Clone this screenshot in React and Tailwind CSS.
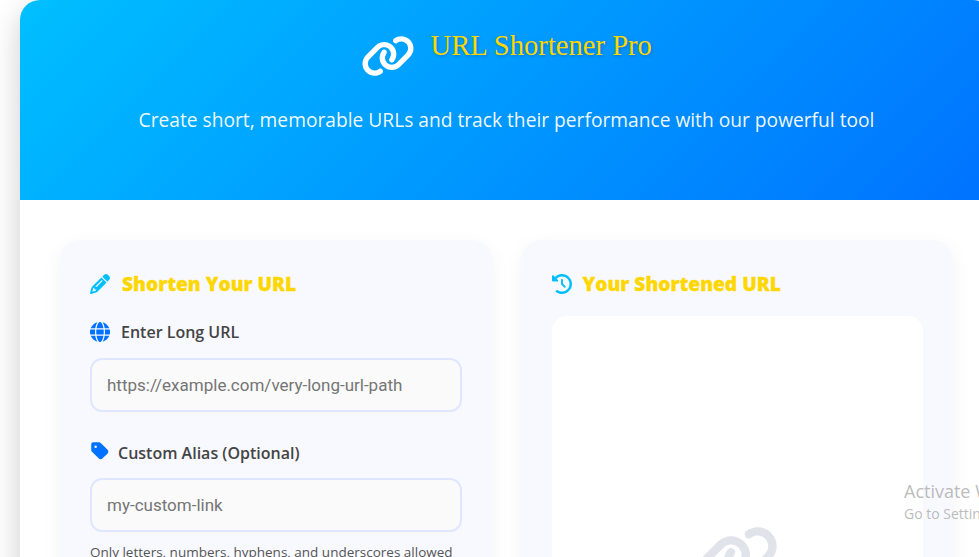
import React from 'react';
import { FaLink, FaPencil, FaGlobe, FaTag, FaClockRotateLeft } from 'react-icons/fa6';

const sans = 'font-["Open_Sans","Noto_Sans",sans-serif]';

function Field({ icon, label, placeholder, labelClass }) {
  return (
    <div>
      <label className={`flex items-center text-[#444] font-semibold text-[16px] leading-[22px] ${labelClass}`}>
        {icon}
        {label}
      </label>
      <input
        readOnly
        placeholder={placeholder}
        className='mt-[15px] w-full h-[54px] rounded-[12px] border-2 border-[#e0e6ff] bg-[#fafafa] px-[15px] text-[17px] font-["Roboto",sans-serif] text-[#333] placeholder:text-[#757575] outline-none'
      />
    </div>
  );
}

export default function App() {
  return (
    <div className={`relative h-[557px] w-[979px] overflow-hidden bg-white ${sans}`}>
      <div className="ml-5 w-[973px] rounded-t-[20px] bg-white shadow-[0_10px_30px_rgba(0,0,0,0.2)]">

        {/* Header */}
        <div className="h-[200px] rounded-t-[20px] bg-[linear-gradient(135deg,#00bfff,#0072ff)] pt-[28px] text-center">
          <div className="flex justify-center">
            <FaLink className="mt-px mr-[15.5px] text-[54px] text-white" />
            <h1 className='pt-[2px] pb-px font-["Liberation_Serif",serif] text-[28.6px] leading-[32px] font-normal text-[#ffd700] [text-shadow:1px_1px_3px_rgba(0,0,0,0.25)]'>
              URL Shortener Pro
            </h1>
          </div>
          <p className="mt-[24px] text-[19.2px] leading-[26px] text-white/95">
            Create short, memorable URLs and track their performance with our powerful tool
          </p>
        </div>

        {/* Cards */}
        <div className="grid h-[500px] grid-cols-2 gap-[30px] p-[40px]">
          <div className="rounded-[20px] bg-[#f8f9ff] p-[30px] shadow-[0_5px_20px_rgba(0,0,0,0.05)]">
            <h2 className="flex h-[28px] items-center text-[19.2px] font-extrabold text-[#ffd700] [-webkit-text-stroke:0.3px_#ffd700]">
              <FaPencil className="mr-[12px] text-[20px] text-[#00bfff]" />
              Shorten Your URL
            </h2>
            <div className="mt-[23px]">
              <Field
                icon={<FaGlobe className="mr-[11px] text-[20px] text-[#0072ff]" />}
                label="Enter Long URL"
                placeholder="https://example.com/very-long-url-path"
              />
            </div>
            <div className="mt-[29px]">
              <Field
                icon={<FaTag className="mr-[8px] mb-[4px] text-[20px] text-[#0072ff]" />}
                label="Custom Alias (Optional)"
                labelClass="mb-[-2px]"
                placeholder="my-custom-link"
              />
            </div>
            <p className="mt-[11px] text-[13.5px] leading-[19px] whitespace-nowrap text-[#555]">
              Only letters, numbers, hyphens, and underscores allowed
            </p>
          </div>

          <div className="rounded-[20px] bg-[#f8f9ff] p-[30px] shadow-[0_5px_20px_rgba(0,0,0,0.05)]">
            <h2 className="flex h-[28px] items-center text-[19.2px] font-extrabold text-[#ffd700] [-webkit-text-stroke:0.3px_#ffd700]">
              <FaClockRotateLeft className="mr-[11px] text-[20px] text-[#00bfff]" />
              Your Shortened URL
            </h2>
            <div className="mt-[18px] flex h-[400px] justify-center rounded-[15px] bg-white pt-[200px]">
              <FaLink className="text-[84px] text-[#e0e3ea]" />
            </div>
          </div>
        </div>
      </div>

      {/* Windows watermark */}
      <div className="absolute top-[480px] left-[904px] whitespace-nowrap text-[#aaa]/80">
        <div className="text-[18px] leading-[22px]">Activate Windows</div>
        <div className="mt-[2px] text-[14px] leading-[20px]">Go to Settings to activate Windows.</div>
      </div>
    </div>
  );
}
